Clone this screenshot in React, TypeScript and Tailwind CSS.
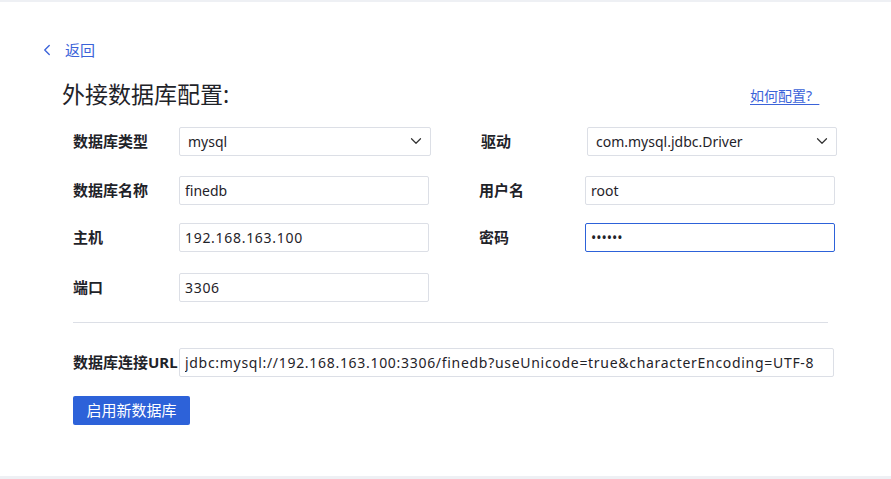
import { ChevronDown, ChevronLeft } from 'lucide-react';

const font = { fontFamily: '"Noto Sans", "Noto Sans CJK SC", sans-serif' };

const Label = ({ text }: { text: string }) => (
  <label className="w-[106px] shrink-0 text-[15px] font-bold text-[#1f2329]">
    {text}
  </label>
);

const Field = ({
  value,
  type = 'text',
  focused = false,
  width = 'w-[250px]',
  digits = false,
}: {
  value: string;
  type?: string;
  focused?: boolean;
  width?: string;
  digits?: boolean;
}) => (
  <input
    type={type}
    readOnly
    value={value}
    className={
      (focused ? 'border-[#2d62d9] ' : 'border-[#dcdfe6] ') +
      (digits ? 'tracking-[0.7px] ' : '') +
      width +
      ' h-[29px] shrink-0 rounded-[2px] border px-[5px] text-[14px] text-[#1f2329] outline-none'
    }
  />
);

const Select = ({ value, width }: { value: string; width: string }) => (
  <div
    className={
      width +
      ' h-[29px] shrink-0 flex items-center justify-between rounded-[2px] border border-[#dcdfe6] pl-[8px] pr-[5px] text-[14px] text-[#1f2329]'
    }
  >
    <span>{value}</span>
    <ChevronDown size={18} strokeWidth={1.6} className="text-[#333]" />
  </div>
);

export default function App() {
  return (
    <div
      style={font}
      className="w-full h-[479px] bg-white border-t-2 border-b-[3px] border-[#eef0f4] flex flex-col"
    >
      <div className="flex items-center gap-[9px] pl-[38px] pt-[37px] text-[15px] text-[#3b63d9]">
        <ChevronLeft size={18} strokeWidth={1.8} />
        <span>返回</span>
      </div>

      <div className="flex items-end justify-between pl-[62px] mt-[16px]">
        <h1 className="text-[23px] leading-[32px] text-[#1f2329]">外接数据库配置:</h1>
        <a className="w-[141px] text-[14px] leading-[20px] mb-[4px] text-[#3b63d9]">
          <span className="underline underline-offset-[3px] whitespace-pre">如何配置?  </span>
        </a>
      </div>

      <div className="pl-[73px] mt-[17px] flex flex-col gap-[20px]">
        <div className="flex items-center">
          <Label text="数据库类型" />
          <Select value="mysql" width="w-[252px]" />
          <div className="w-[50px]" />
          <Label text="驱动" />
          <Select value="com.mysql.jdbc.Driver" width="w-[250px]" />
        </div>
        <div className="flex items-center">
          <Label text="数据库名称" />
          <Field value="finedb" />
          <div className="w-[50px]" />
          <Label text="用户名" />
          <Field value="root" />
        </div>
        <div className="flex items-center -mt-[2px]">
          <Label text="主机" />
          <Field value="192.168.163.100" digits />
          <div className="w-[50px]" />
          <Label text="密码" />
          <Field value="123456" type="password" focused />
        </div>
        <div className="flex items-center mt-[1px]">
          <Label text="端口" />
          <Field value="3306" digits />
        </div>
      </div>

      <div className="ml-[73px] w-[755px] h-px bg-[#dcdfe6] mt-[20px]" />

      <div className="pl-[73px] mt-[25px] flex items-center">
        <Label text="数据库连接URL" />
        <Field
          value="jdbc:mysql://192.168.163.100:3306/finedb?useUnicode=true&characterEncoding=UTF-8"
          width="w-[655px]"
          digits
        />
      </div>

      <div className="pl-[73px] mt-[19px]">
        <button className="w-[117px] h-[29px] rounded-[2px] bg-[#2d62d9] text-[15px] text-white">
          启用新数据库
        </button>
      </div>
    </div>
  );
}
